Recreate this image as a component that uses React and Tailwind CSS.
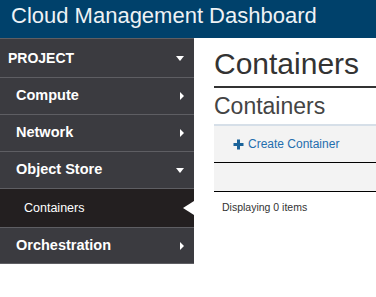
import React from 'react';

const font = { fontFamily: '"Liberation Sans", Arial, sans-serif' };

function CaretRight() {
  return <span className="block w-0 h-0 border-y-[4px] border-y-transparent border-l-[4px] border-l-white" />;
}

function CaretDown() {
  return <span className="block w-0 h-0 border-x-[4.5px] border-x-transparent border-t-[5px] border-t-white" />;
}

function NavItem({ label, open, height }) {
  return (
    <div className={`flex items-center justify-between pl-4 pr-[10px] border-b border-[#5e5e63] ${height}`}>
      <span className="text-[14.5px] font-bold text-white">{label}</span>
      {open ? <CaretDown /> : <CaretRight />}
    </div>
  );
}

export default function App() {
  return (
    <div className="w-[376px] h-[297px] overflow-hidden bg-white" style={font}>
      <div className="h-[38px] bg-[#00416b] pl-[11px] pt-[5px]">
        <span className="text-[22px] leading-[22px] text-[#eef2f5] whitespace-nowrap">Cloud Management Dashboard</span>
      </div>
      <div className="flex">
        <div className="w-[194px] shrink-0 self-start bg-[#3b3b40] border-t border-[#5e5e63]">
          <div className="flex items-center justify-between pl-2 pr-[10px] h-[39px] border-b border-[#5e5e63]">
            <span className="text-[14px] font-bold text-white">PROJECT</span>
            <CaretDown />
          </div>
          <NavItem label="Compute" height="h-[37px]" />
          <NavItem label="Network" height="h-[37px]" />
          <NavItem label="Object Store" open height="h-[37px]" />
          <div className="flex items-center justify-between pl-6 h-[39px] bg-[#231f20] border-b border-[#5e5e63]">
            <span className="text-[12.5px] text-white">Containers</span>
            <span className="block w-0 h-0 border-y-[7px] border-y-transparent border-r-[11px] border-r-white" />
          </div>
          <NavItem label="Orchestration" height="h-[36px]" />
        </div>
        <div className="flex-1 min-w-0 pl-5">
          <div className="pt-[11px] pb-[7px] border-b-2 border-[#333333]">
            <h1 className="text-[30px] leading-[30px] text-[#333333] whitespace-nowrap">Containers</h1>
          </div>
          <h2 className="mt-[7px] text-[23px] leading-[23px] text-[#444444] whitespace-nowrap">Containers</h2>
          <div className="mt-[6px] w-[300px] bg-[#f3f3f3] border-t-2 border-[#d6dfe8]">
            <div className="h-[37px] flex items-center pl-[19px] gap-[4px] border-b border-black">
              <svg width="11" height="11" viewBox="0 0 11 11" className="shrink-0">
                <path d="M5.5 0.5v10M0.5 5.5h10" stroke="#1b6399" strokeWidth="3" />
              </svg>
              <span className="text-[12px] text-[#1f6eae] whitespace-nowrap">Create Container</span>
            </div>
            <div className="h-[29px] border-b border-black" />
          </div>
          <div className="h-[32px] flex items-center pl-2">
            <span className="text-[10.5px] text-[#333333] whitespace-nowrap">Displaying 0 items</span>
          </div>
        </div>
      </div>
    </div>
  );
}
